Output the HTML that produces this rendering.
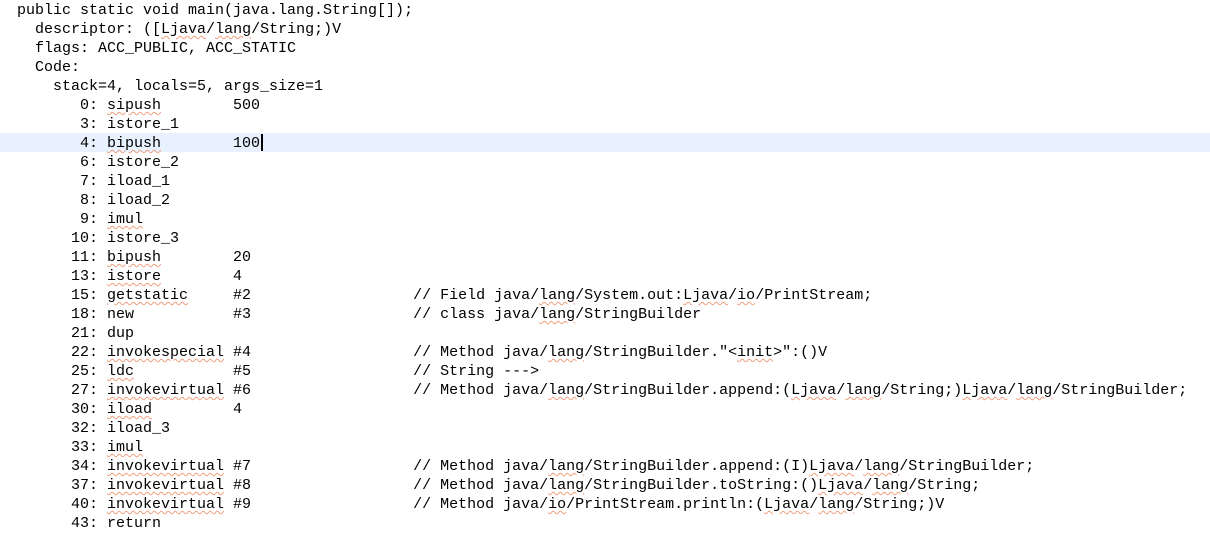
<!DOCTYPE html>
<html><head><meta charset="utf-8"><style>
html,body{margin:0;padding:0;background:#fff;width:1210px;height:529px;overflow:hidden}
pre{margin:0;position:absolute;left:17px;top:1px;font-family:"Liberation Mono",monospace;font-size:15px;line-height:19px;color:#000}
.hl{position:absolute;left:0;top:133px;width:1210px;height:19px;background:#e8f2fe}
.cur{position:absolute;left:261px;top:134px;width:2px;height:17px;background:#000}
u{text-decoration:underline wavy #f0a080;text-decoration-thickness:1px;text-underline-offset:2px}
</style></head><body>
<div class="hl"></div>
<pre>public static void main(java.lang.String[]);
  descriptor: ([<u>Ljava</u>/<u>lang</u>/String;)V
  flags: ACC_PUBLIC, ACC_STATIC
  Code:
    stack=4, locals=5, args_size=1
       0: <u>sipush</u>        500
       3: istore_1
       4: <u>bipush</u>        100
       6: istore_2
       7: iload_1
       8: iload_2
       9: <u>imul</u>
      10: istore_3
      11: <u>bipush</u>        20
      13: <u>istore</u>        4
      15: <u>getstatic</u>     #2                  // Field java/<u>lang</u>/System.out:<u>Ljava</u>/<u>io</u>/PrintStream;
      18: new           #3                  // class java/<u>lang</u>/StringBuilder
      21: dup
      22: <u>invokespecial</u> #4                  // Method java/<u>lang</u>/StringBuilder."&lt;<u>init</u>&gt;":()V
      25: <u>ldc</u>           #5                  // String ---&gt;
      27: <u>invokevirtual</u> #6                  // Method java/<u>lang</u>/StringBuilder.append:(<u>Ljava</u>/<u>lang</u>/String;)<u>Ljava</u>/<u>lang</u>/StringBuilder;
      30: <u>iload</u>         4
      32: iload_3
      33: <u>imul</u>
      34: <u>invokevirtual</u> #7                  // Method java/<u>lang</u>/StringBuilder.append:(I)<u>Ljava</u>/<u>lang</u>/StringBuilder;
      37: <u>invokevirtual</u> #8                  // Method java/<u>lang</u>/StringBuilder.toString:()<u>Ljava</u>/<u>lang</u>/String;
      40: <u>invokevirtual</u> #9                  // Method java/<u>io</u>/PrintStream.println:(<u>Ljava</u>/<u>lang</u>/String;)V
      43: return</pre>
<div class="cur"></div>
</body></html>
